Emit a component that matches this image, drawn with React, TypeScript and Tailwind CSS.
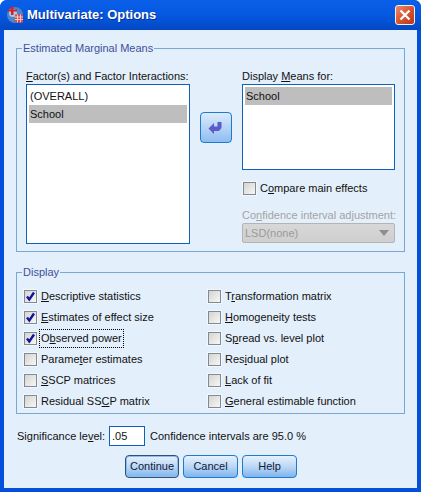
const font = "font-['Liberation_Sans',Arial,sans-serif]";

function Check({ checked = false, label, focus = false }: { checked?: boolean; label: React.ReactNode; focus?: boolean }) {
  return (
    <div className="flex h-[21px] items-center">
      <span className="relative flex h-[13px] w-[13px] shrink-0 items-center justify-center border border-[#7f8a96] bg-gradient-to-br from-[#d4d4d0] to-[#f7f7f4] shadow-[0_0_0_1px_#f4f8fc]">
        {checked && (
          <svg viewBox="0 0 13 13" className="absolute -left-px -top-px h-[13px] w-[13px]">
            <path d="M3 6.5 L5.3 9.5 L10 2.5" fill="none" stroke="#14149c" strokeWidth="2.4" />
          </svg>
        )}
      </span>
      <span className={"ml-[3px] whitespace-nowrap px-px leading-[17px] " + (focus ? "outline-1 outline-dotted outline-black" : "outline-none")}>
        {label}
      </span>
    </div>
  );
}

function Btn({ children, dark = false }: { children: React.ReactNode; dark?: boolean }) {
  return (
    <button className={"flex h-[23px] items-center justify-center rounded-[4px] border bg-gradient-to-b from-[#e6f1fc] via-[#bcd8f5] to-[#7fb4ec] text-[#10203a] " + (dark ? "w-[54px] border-[#2f5177] shadow-[inset_0_0_0_1px_#8dbdf0]" : "w-[55px] border-[#1a7ad4]")}>
      {children}
    </button>
  );
}

function Legend({ children }: { children: React.ReactNode }) {
  return (
    <span className="absolute -top-[8px] left-[5px] bg-[#e3effb] px-[1px] leading-[14px] text-[#3f4f9a]">{children}</span>
  );
}

export default function App() {
  return (
    <div className={"flex h-[492px] w-[421px] flex-col overflow-hidden rounded-t-[7px] bg-[#0450dc] text-[11px] text-[#111] " + font}>
      <div className="flex h-[30px] shrink-0 items-center bg-gradient-to-b from-[#0a5fe8] via-[#0558e0] to-[#0348c4] pl-[6px] pr-[6px]">
        <svg viewBox="0 0 18 18" className="h-[18px] w-[18px] shrink-0">
          <circle cx="9" cy="9" r="8" fill="#4a86c8" />
          <circle cx="7" cy="7" r="4" fill="#a8c8e8" />
          <path d="M5 0.5h2.5V3.5H11V5.5H7.5V9H5V5.5H1.5V3.5H5Z" fill="#d4202c" />
          <rect x="9" y="8.5" width="8" height="8" fill="#e04848" />
          <path d="M9 11h8M9 13.5h8M11.5 8.5v8M14.5 8.5v8" stroke="#fbe0e0" strokeWidth="0.8" />
        </svg>
        <span className="ml-[3px] text-[13px] font-bold text-white [text-shadow:1px_1px_0_#0a2f8c]">Multivariate: Options</span>
        <span className="ml-auto flex h-[20px] w-[20px] items-center justify-center rounded-[3px] border border-[#f2f2f2] bg-gradient-to-br from-[#e88a6c] via-[#d8552e] to-[#b8361a]">
          <svg viewBox="0 0 12 12" className="h-[12px] w-[12px]">
            <path d="M1.5 1.5 L10.5 10.5 M10.5 1.5 L1.5 10.5" stroke="#fff" strokeWidth="2.3" />
          </svg>
        </span>
      </div>

      <div className="mx-[4px] mb-[4px] flex flex-1 flex-col bg-[#e3effb] px-[12px] pt-[18px]">
        <div className="relative h-[204px] border border-[#7aa8d4] pl-[9px] pt-[20px]">
          <Legend>Estimated Marginal Means</Legend>
          <div className="flex">
            <div className="flex w-[164px] flex-col">
              <div className="h-[15px] whitespace-nowrap leading-[14px]"><u>F</u>actor(s) and Factor Interactions:</div>
              <div className="h-[160px] border border-[#0f62b8] bg-white p-[2px]">
                <div className="flex h-[18px] items-center pl-px">(OVERALL)</div>
                <div className="flex h-[18px] items-center bg-[#bebebe] pl-px">School</div>
              </div>
            </div>
            <div className="ml-[10px] pt-[43px]">
              <div className="flex h-[31px] w-[32px] items-center justify-center rounded-[4px] border border-[#1a7ad4] bg-gradient-to-b from-[#dcebfb] to-[#8fbdf0]">
                <svg viewBox="0 0 16 16" className="h-[16px] w-[16px]">
                  <path d="M0.5 8.5 L6 3 V6.5 H9.5 V2 H13.5 V8 L11 11 H6 V14 Z" fill="#5c5cc8" />
                </svg>
              </div>
            </div>
            <div className="ml-[10px] flex w-[153px] flex-col">
              <div className="h-[15px] whitespace-nowrap leading-[14px]">Display <u>M</u>eans for:</div>
              <div className="h-[86px] border border-[#0f62b8] bg-white p-[2px]">
                <div className="flex h-[18px] items-center bg-[#bebebe] pl-px">School</div>
              </div>
              <div className="mt-[8px] pl-px">
                <Check label={<>C<u>o</u>mpare main effects</>} />
              </div>
              <div className="mt-[9px] h-[15px] whitespace-nowrap leading-[14px] text-[#a3a3a3]">Co<u>n</u>fidence interval adjustment:</div>
              <div className="flex h-[20px] items-center rounded-[2px] border border-[#b4b4b4] bg-gradient-to-b from-[#d8d8d8] to-[#cfcfcf] pl-[2px] pr-[5px] text-[#9a9a9a]">
                LSD(none)
                <svg viewBox="0 0 10 6" className="ml-auto h-[6px] w-[10px]"><path d="M0 0H10L5 6Z" fill="#8e8e8e" /></svg>
              </div>
            </div>
          </div>
        </div>

        <div className="relative mt-[20px] flex h-[142px] border border-[#7aa8d4] pl-[7px] pt-[13px]">
          <Legend>Display</Legend>
          <div className="w-[184px]">
            <Check checked label={<><u>D</u>escriptive statistics</>} />
            <Check checked label={<><u>E</u>stimates of effect size</>} />
            <Check checked focus label={<>O<u>b</u>served power</>} />
            <Check label={<>Parame<u>t</u>er estimates</>} />
            <Check label={<><u>S</u>SCP matrices</>} />
            <Check label={<>Residual SS<u>C</u>P matrix</>} />
          </div>
          <div>
            <Check label={<>T<u>r</u>ansformation matrix</>} />
            <Check label={<><u>H</u>omogeneity tests</>} />
            <Check label={<>S<u>p</u>read vs. level plot</>} />
            <Check label={<>Res<u>i</u>dual plot</>} />
            <Check label={<><u>L</u>ack of fit</>} />
            <Check label={<><u>G</u>eneral estimable function</>} />
          </div>
        </div>

        <div className="mt-[12px] flex h-[20px] items-center pl-px">
          <span className="w-[92px] whitespace-nowrap">Significance le<u>v</u>el:</span>
          <span className="flex h-[20px] w-[36px] items-center border border-[#0f62b8] bg-white pl-[2px]">.05</span>
          <span className="ml-[5px] whitespace-nowrap">Confidence intervals are 95.0 %</span>
        </div>

        <div className="mt-[9px] flex gap-[4px] pl-[109px]">
          <Btn dark>Continue</Btn>
          <Btn>Cancel</Btn>
          <Btn>Help</Btn>
        </div>
      </div>
    </div>
  );
}
